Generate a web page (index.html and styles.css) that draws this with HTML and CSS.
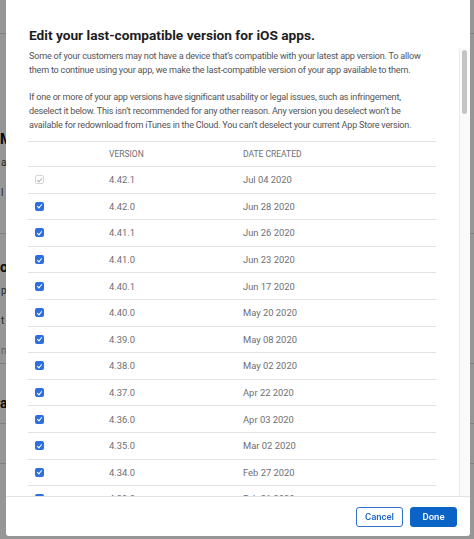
FILE: index.html
```html
<!DOCTYPE html>
<html>
<head>
<meta charset="utf-8">
<link rel="stylesheet" href="styles.css">
</head>
<body>
<div class="page">
  <div class="bg-sec s1"></div>
  <div class="bg-sec s2"><span class="bg-big">M</span><span class="bg-small">a</span><span class="bg-small">l</span></div>
  <div class="bg-sec s3"><span class="bg-big">o</span><span class="bg-small">p</span><span class="bg-small">t</span><span class="bg-small light">n</span></div>
  <div class="bg-sec s4"><span class="bg-big">a</span></div>
  <div class="bg-sec s5"></div>
</div>
<div class="overlay"></div>
<div class="modal">
  <h1 class="title">Edit your last-compatible version for iOS apps.</h1>
  <div class="body">
    <div class="scroll">
      <p class="desc">Some of your customers may not have a device that’s compatible with your latest app version. To allow them to continue using your app, we make the last-compatible version of your app available to them.</p>
      <p class="desc">If one or more of your app versions have significant usability or legal issues, such as infringement,<br>deselect it below. This isn’t recommended for any other reason. Any version you deselect won’t be<br>available for redownload from iTunes in the Cloud. You can’t deselect your current App Store version.</p>
      <table class="versions">
        <thead>
          <tr><th class="c-check"></th><th class="c-ver">VERSION</th><th>DATE CREATED</th></tr>
        </thead>
        <tbody>
          <tr><td class="c-check"><span class="cb disabled"></span></td><td class="c-ver">4.42.1</td><td>Jul 04 2020</td></tr>
          <tr><td class="c-check"><span class="cb"></span></td><td class="c-ver">4.42.0</td><td>Jun 28 2020</td></tr>
          <tr><td class="c-check"><span class="cb"></span></td><td class="c-ver">4.41.1</td><td>Jun 26 2020</td></tr>
          <tr><td class="c-check"><span class="cb"></span></td><td class="c-ver">4.41.0</td><td>Jun 23 2020</td></tr>
          <tr><td class="c-check"><span class="cb"></span></td><td class="c-ver">4.40.1</td><td>Jun 17 2020</td></tr>
          <tr><td class="c-check"><span class="cb"></span></td><td class="c-ver">4.40.0</td><td>May 20 2020</td></tr>
          <tr><td class="c-check"><span class="cb"></span></td><td class="c-ver">4.39.0</td><td>May 08 2020</td></tr>
          <tr><td class="c-check"><span class="cb"></span></td><td class="c-ver">4.38.0</td><td>May 02 2020</td></tr>
          <tr><td class="c-check"><span class="cb"></span></td><td class="c-ver">4.37.0</td><td>Apr 22 2020</td></tr>
          <tr><td class="c-check"><span class="cb"></span></td><td class="c-ver">4.36.0</td><td>Apr 03 2020</td></tr>
          <tr><td class="c-check"><span class="cb"></span></td><td class="c-ver">4.35.0</td><td>Mar 02 2020</td></tr>
          <tr><td class="c-check"><span class="cb"></span></td><td class="c-ver">4.34.0</td><td>Feb 27 2020</td></tr>
          <tr><td class="c-check"><span class="cb"></span></td><td class="c-ver">4.33.0</td><td>Feb 21 2020</td></tr>
        </tbody>
      </table>
    </div>
    <div class="track"><div class="thumb"></div></div>
  </div>
  <div class="footer">
    <button class="btn cancel">Cancel</button>
    <button class="btn done">Done</button>
  </div>
</div>
</body>
</html>
```
FILE: styles.css
```css
* { box-sizing: border-box; }
html, body { margin: 0; padding: 0; }
body {
  width: 474px;
  height: 539px;
  overflow: hidden;
  background: #fff;
  font-family: Roboto, "Liberation Sans", sans-serif;
}
.page {
  height: 539px;
  overflow: hidden;
  display: flex;
  flex-direction: column;
}
.bg-sec {
  display: flex;
  flex-direction: column;
  border-bottom: 1px solid #d8d8d8;
}
.s1 { height: 34px; }
.s2 { height: 200px; padding-top: 96px; }
.s3 { height: 130px; padding-top: 24px; }
.s4 { height: 60px; padding-top: 30px; }
.s5 { height: 40px; }
.bg-big { font-size: 14px; font-weight: 700; color: #111; line-height: 18px; margin-bottom: 8px; }
.bg-small { font-size: 10px; color: #444; line-height: 14px; margin-bottom: 16px; padding-left: 1px; }
.bg-small.light { color: #aaa; }

.overlay {
  position: fixed;
  inset: 0;
  background: rgba(0, 0, 0, 0.41);
}
.modal {
  position: fixed;
  left: 6px;
  top: 0;
  width: 464px;
  height: 536px;
  background: #fff;
  border-radius: 0 0 3px 3px;
  display: flex;
  flex-direction: column;
}
.title {
  margin: 0;
  padding: 27px 23px 0;
  height: 48px;
  font-size: 13.7px;
  line-height: 17px;
  font-weight: 700;
  color: #1d1d1f;
}
.body {
  flex: 1;
  display: flex;
  min-height: 0;
  border-bottom: 1px solid #e2e2e2;
}
.scroll {
  flex: 1;
  overflow: hidden;
  padding: 1px 22px 0 23px;
}
.desc {
  margin: 0 0 13px;
  font-size: 9.1px;
  letter-spacing: -0.22px;
  line-height: 14px;
  color: #545456;
  white-space: normal;
}
.desc + .desc { margin-bottom: 9px; }
.versions {
  width: 100%;
  border-collapse: collapse;
  border-top: 1px solid #e3e3e3;
  margin-left: -1px;
}
.versions th {
  height: 25px;
  text-align: left;
  font-size: 8.5px;
  font-weight: 400;
  color: #6e6e73;
  border-bottom: 1px solid #e3e3e3;
  padding: 0;
}
.versions td {
  height: 26.6px;
  padding: 0;
  font-size: 9.4px;
  color: #6e6e73;
  border-bottom: 1px solid #e3e3e3;
}
.c-check { width: 81px; padding-left: 7px !important; }
.c-ver { width: 134px; }
.cb {
  display: block;
  width: 9px;
  height: 9px;
  border-radius: 2px;
  background: #2d6fe0;
  position: relative;
}
.cb::after {
  content: "";
  position: absolute;
  left: 3px;
  top: 1.5px;
  width: 2px;
  height: 4px;
  border: solid #fff;
  border-width: 0 1.3px 1.3px 0;
  transform: rotate(40deg);
}
.cb.disabled {
  background: #fff;
  border: 1px solid #d6d6d6;
}
.cb.disabled::after {
  left: 2px;
  top: 0.5px;
  border-color: #b5b5b5;
}
.track {
  width: 11px;
  background: #fafafa;
  border-left: 1px solid #ececec;
  padding: 2px 2px 0 2px;
}
.thumb {
  width: 5px;
  height: 64px;
  border-radius: 3px;
  background: #c4c4c4;
}
.footer {
  height: 39px;
  display: flex;
  justify-content: flex-end;
  align-items: center;
  gap: 7px;
  padding: 0 13px 0 0;
}
.btn {
  width: 47px;
  height: 20px;
  border-radius: 3px;
  font-family: Roboto, "Liberation Sans", sans-serif;
  font-size: 9.5px;
  font-weight: 500;
  padding: 0;
}
.cancel {
  background: #fff;
  color: #1a66c4;
  border: 1px solid #2f72c8;
}
.done {
  background: #0b63c5;
  color: #fff;
  border: 1px solid #0b63c5;
}
```
